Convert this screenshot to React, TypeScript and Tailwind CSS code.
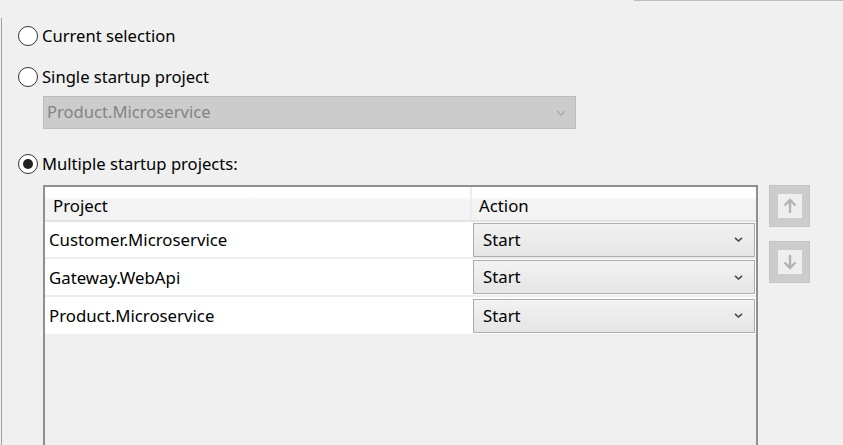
import React from "react";

const font = { fontFamily: '"Noto Sans", "Open Sans", sans-serif' };

function Radio({ checked, label }: { checked?: boolean; label: string }) {
  return (
    <div className="flex items-center h-[22px]">
      <div className="w-[20px] h-[20px] rounded-full border border-[#333333] bg-white flex items-center justify-center ml-[16px]">
        {checked && <div className="w-[10px] h-[10px] rounded-full bg-[#222222]" />}
      </div>
      <span className="ml-[4px] text-[16.6px] text-black leading-none">{label}</span>
    </div>
  );
}

function Chevron({ color, small }: { color: string; small?: boolean }) {
  return small ? (
    <svg width="9" height="5" viewBox="0 0 9 5">
      <path d="M1 0.8 L4.5 4 L8 0.8" fill="none" stroke={color} strokeWidth="1.6" />
    </svg>
  ) : (
    <svg width="10" height="6" viewBox="0 0 10 6">
      <path d="M1 1 L5 5 L9 1" fill="none" stroke={color} strokeWidth="1.4" />
    </svg>
  );
}

function ActionSelect() {
  return (
    <div className="ml-[1px] mr-[1px] h-[34px] flex-1 border border-[#acacac] bg-gradient-to-b from-[#f2f2f2] to-[#e5e5e5] flex items-center justify-between pl-[9px] pr-[11px]">
      <span className="text-[16.8px] text-black">Start</span>
      <Chevron color="#4a4a4a" small />
    </div>
  );
}

function ArrowBtn({ up }: { up?: boolean }) {
  return (
    <div className="w-[41px] h-[42px] bg-[#cccccc] border border-[#c4c4c4] flex items-center justify-center">
      <div className="w-[24px] h-[24px] bg-[#eeeeee] flex items-center justify-center">
        <svg width="14" height="16" viewBox="0 0 14 16">
          {up ? (
            <path d="M7 2 V15 M1.5 7.5 L7 2 L12.5 7.5" fill="none" stroke="#b3b3b3" strokeWidth="2.4" />
          ) : (
            <path d="M7 1 V14 M1.5 8.5 L7 14 L12.5 8.5" fill="none" stroke="#b3b3b3" strokeWidth="2.4" />
          )}
        </svg>
      </div>
    </div>
  );
}

const rows = ["Customer.Microservice", "Gateway.WebApi", "Product.Microservice"];

export default function App() {
  return (
    <div className="w-[843px] h-[445px] bg-[#f0f0f0] overflow-hidden" style={font}>
      <div className="ml-[634px] h-[1px] bg-[#bdbdbd]" />
      <div className="ml-[1px] mt-[17px] border-l border-[#a0a0a0] h-[500px] pt-[7px]">
        <Radio label="Current selection" />
        <div className="mt-[19px]">
          <Radio label="Single startup project" />
        </div>
        <div className="ml-[41px] mt-[8px] w-[533px] h-[33px] bg-[#cccccc] border border-[#bcbcbc] flex items-center justify-between pl-[3px] pr-[9px]">
          <span className="text-[16.6px] text-[#838383]">Product.Microservice</span>
          <Chevron color="#a9a9a9" />
        </div>
        <div className="mt-[24px]">
          <Radio checked label="Multiple startup projects:" />
        </div>
        <div className="flex mt-[10px] ml-[41px]">
          <div className="w-[715px] h-[300px] border-2 border-[#8e8f8f] bg-[#efefef] flex flex-col">
            <div className="flex h-[35px] bg-gradient-to-b from-white from-30% to-[#f3f3f3] to-40% border-b-2 border-[#e3e3e3]">
              <div className="w-[427px] border-r-2 border-[#ececec] flex items-center pl-[8px] pt-[4px]">
                <span className="text-[16.8px] text-black">Project</span>
              </div>
              <div className="flex-1 flex items-center pl-[7px] pt-[4px]">
                <span className="text-[16.8px] text-black">Action</span>
              </div>
            </div>
            {rows.map((r, i) => (
              <div key={r} className={`flex bg-white items-center ${i === 1 ? "h-[38px]" : "h-[37px]"} ${i < 2 ? "border-b-2 border-[#ededed]" : ""}`}>
                <div className="w-[427px] pl-[4px] pt-[1px]">
                  <span className="text-[16.8px] text-black">{r}</span>
                </div>
                <ActionSelect />
              </div>
            ))}
          </div>
          <div className="ml-[11px] flex flex-col gap-[14px]">
            <ArrowBtn up />
            <ArrowBtn />
          </div>
        </div>
      </div>
    </div>
  );
}
